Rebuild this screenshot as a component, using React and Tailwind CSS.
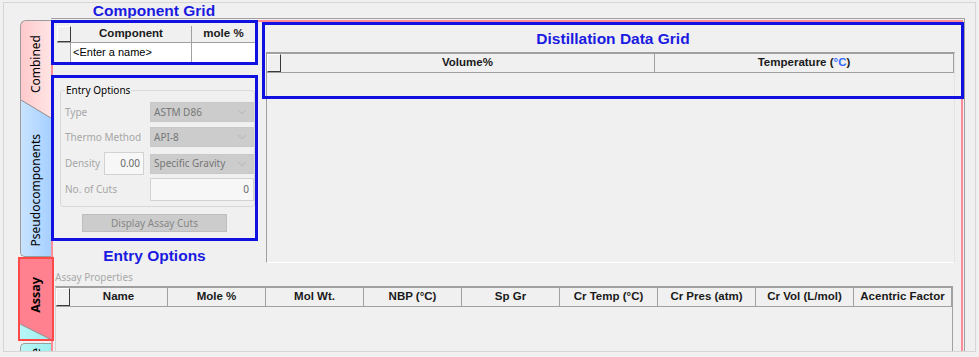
import { ChevronDown } from 'lucide-react';

const sans = "font-['Liberation_Sans',Arial,sans-serif]";
const ui = "font-['Noto_Sans',sans-serif]";

const assayCols = [
    'Name',
    'Mole %',
    'Mol Wt.',
    'NBP (°C)',
    'Sp Gr',
    'Cr Temp (°C)',
    'Cr Pres (atm)',
    'Cr Vol (L/mol)',
    'Acentric Factor',
];

function TabCut({ id, from, to, w = 30, h }) {
    return (
        <svg width={w} height={h} className="block shrink-0">
            <defs>
                <linearGradient id={id} x1="0" y1="0" x2="1" y2="0">
                    <stop offset="0" stopColor={from} />
                    <stop offset="1" stopColor={to} />
                </linearGradient>
            </defs>
            <polygon points={`0,0 ${w},${h} 0,${h}`} fill={`url(#${id})`} />
            <line x1="0" y1="0" x2={w} y2={h} stroke="#8e8e8e" strokeWidth="1" />
        </svg>
    );
}

function Tabs() {
    return (
        <div className={`flex w-[47px] shrink-0 flex-col pl-[16px] pt-[2px] text-[12px] text-black ${ui}`}>
            <div className="flex h-[98px] w-[31px] shrink-0 flex-col overflow-hidden rounded-tl-[6px] border-l border-t border-[#9c9c9c] bg-gradient-to-r from-[#ffc9cc] to-[#ffe4e4]">
                <div className="flex flex-1 items-center justify-center pt-[8px]">
                    <span className="rotate-180 leading-none [writing-mode:vertical-rl]">Combined</span>
                </div>
                <TabCut id="cut-blue" from="#c9e3ff" to="#a6d0ff" h={18} />
            </div>
            <div className="flex h-[139px] w-[31px] shrink-0 items-center justify-center rounded-bl-[5px] border-b border-l border-[#9c9c9c] bg-gradient-to-r from-[#c9e3ff] to-[#a6d0ff] pt-[6px]">
                <span className="rotate-180 leading-none [writing-mode:vertical-rl]">Pseudocomponents</span>
            </div>
            <div className="relative z-10 -ml-[2px] flex h-[84px] w-[36px] shrink-0 flex-col border-2 border-[#ff4848] bg-[#ff808f]">
                <div className="flex flex-1 items-center justify-center pt-[6px]">
                    <span className="rotate-180 text-[12.5px] font-bold leading-none [writing-mode:vertical-rl]">Assay</span>
                </div>
                <TabCut id="cut-cyan" from="#b8f6f6" to="#9eeeee" w={30} h={15} />
            </div>
            <div className="mt-[2px] flex h-[40px] w-[31px] shrink-0 justify-center rounded-tl-[5px] border-l border-t border-[#9c9c9c] bg-gradient-to-r from-[#b8f6f6] to-[#9eeeee] pt-[4px]">
                <span className="rotate-180 self-start leading-none [writing-mode:vertical-rl]">Single</span>
            </div>
        </div>
    );
}

function CornerCell() {
    return (
        <div className="h-full w-[14px] shrink-0 border-b border-l border-r border-t border-b-[#3a3a3a] border-l-white border-r-[#3a3a3a] border-t-white bg-[#f0f0f0]" />
    );
}

function Combo({ value }) {
    return (
        <div className="flex h-[20px] flex-1 items-center justify-between border border-[#c8c8c8] bg-[#cccccc] pl-[3px] pr-[4px] text-[#767676]">
            <span>{value}</span>
            <ChevronDown size={14} strokeWidth={1} className="text-[#a4a4a4]" />
        </div>
    );
}

function ComponentGrid() {
    return (
        <div className="-ml-[2px] -mt-[2px] h-[45px] w-[207px] shrink-0 border-[3px] border-[#1010e0] pl-[3px] pt-[3px]">
            <div className={`flex h-[17px] border-b border-[#a0a0a0] text-[11.5px] font-bold text-[#1a1a1a] ${sans}`}>
                <CornerCell />
                <div className="flex w-[121px] items-center justify-center border-r border-[#a0a0a0]">Component</div>
                <div className="flex flex-1 items-center justify-center">mole %</div>
            </div>
            <div className={`flex h-[19px] text-[11px] text-black ${sans}`}>
                <div className="w-[14px] border-r border-[#a0a0a0] bg-[#f0f0f0]" />
                <div className="flex w-[121px] items-center border-r border-[#a0a0a0] bg-white pl-[2px]">&lt;Enter a name&gt;</div>
                <div className="flex-1 bg-white" />
            </div>
        </div>
    );
}

function EntryOptions() {
    return (
        <div className={`-ml-[2px] mt-[10px] flex h-[166px] w-[207px] shrink-0 flex-col border-[3px] border-[#1010e0] text-[10px] ${ui}`}>
            <fieldset className="ml-[6px] mt-[5px] h-[124px] rounded-[3px] border border-[#d9d9d9] pl-[4px]">
                <legend className="px-[1px] text-[10px] leading-[14px] text-black">Entry Options</legend>
                <div className="mt-[5px] flex h-[20px] items-center">
                    <span className="w-[85px] text-[#a6a6a6]">Type</span>
                    <Combo value="ASTM D86" />
                </div>
                <div className="mt-[5px] flex h-[20px] items-center">
                    <span className="w-[85px] text-[#a6a6a6]">Thermo Method</span>
                    <Combo value="API-8" />
                </div>
                <div className="mt-[5px] flex h-[23px] items-center">
                    <span className="w-[39px] text-[#a6a6a6]">Density</span>
                    <div className="flex h-[23px] w-[40px] items-center justify-end border border-[#d2d2d2] bg-[#f7f7f7] pr-[3px] text-[#6a6a6a]">0.00</div>
                    <div className="ml-[6px] flex flex-1">
                        <Combo value="Specific Gravity" />
                    </div>
                </div>
                <div className="mt-[3px] flex h-[23px] items-center">
                    <span className="w-[85px] text-[#a6a6a6]">No. of Cuts</span>
                    <div className="flex h-[23px] flex-1 items-center justify-end border border-[#d2d2d2] bg-[#f7f7f7] pr-[4px] text-[#6a6a6a]">0</div>
                </div>
            </fieldset>
            <button className="mx-auto mt-[7px] h-[18px] w-[145px] border border-[#bdbdbd] bg-[#cccccc] leading-none text-[#868686]">
                Display Assay Cuts
            </button>
        </div>
    );
}

function Distillation() {
    return (
        <div className="ml-[4px] flex flex-1 flex-col">
            <div className="-mr-[3px] flex h-[77px] shrink-0 flex-col border-[3px] border-[#1010e0]">
                <div className={`flex h-[27px] items-center justify-center text-[15.5px] font-bold text-[#1a1ae0] ${sans}`}>
                    Distillation Data Grid
                </div>
                <div className="ml-[1px] flex w-[689px] flex-1 flex-col border-l border-r border-t-2 border-l-[#a0a0a0] border-r-[#e4e4e4] border-t-[#a0a0a0]">
                    <div className={`flex h-[19px] border-b border-[#a0a0a0] text-[11.5px] font-bold text-[#1a1a1a] ${sans}`}>
                        <CornerCell />
                        <div className="flex w-[374px] items-center justify-center border-r border-[#a0a0a0]">Volume%</div>
                        <div className="flex flex-1 items-center justify-center border-r border-[#a0a0a0]">
                            Temperature (<span className="text-[#2f6bff]">°C</span>)
                        </div>
                    </div>
                </div>
            </div>
            <div className="ml-[4px] h-[164px] w-[689px] shrink-0 border-b border-l border-r border-b-white border-l-[#a0a0a0] border-r-[#e4e4e4]" />
        </div>
    );
}

function AssayGrid() {
    return (
        <div className="ml-[2px] flex w-[898px] flex-1 flex-col border-l border-r border-t-2 border-l-[#d4d4d4] border-r-[#a0a0a0] border-t-[#a0a0a0]">
            <div className={`flex h-[19px] shrink-0 border-b border-[#a0a0a0] text-[11.5px] font-bold text-[#1a1a1a] ${sans}`}>
                <CornerCell />
                {assayCols.map((c) => (
                    <div key={c} className="flex w-[98px] shrink-0 items-center justify-center border-r border-[#a0a0a0]">
                        {c}
                    </div>
                ))}
            </div>
        </div>
    );
}

export default function App() {
    return (
        <div className="h-[357px] w-[979px] overflow-hidden bg-[#f0f0f0] pb-[5px] pl-[3px] pr-[3px] pt-[2px]">
            <div className="flex h-full flex-col overflow-hidden border border-[#d6d6d6]">
                <div className="flex h-[15px] shrink-0">
                    <div className="w-[49px] shrink-0" />
                    <div className={`w-[202px] text-center text-[15.5px] font-bold leading-[15px] text-[#1a1ae0] ${sans}`}>
                        Component Grid
                    </div>
                </div>
                <div className="flex min-h-0 flex-1">
                    <Tabs />
                    <div className="w-[914px] shrink-0 border-r border-t border-[#a0a0a0] pr-[1px] pt-[1px]">
                        <div className="flex h-full flex-col border-l-2 border-r-2 border-t-2 border-[#ff8a98]">
                            <div className="flex h-[243px] shrink-0">
                                <div className="flex w-[205px] shrink-0 flex-col">
                                    <ComponentGrid />
                                    <EntryOptions />
                                    <div className={`-ml-[2px] mt-[6px] w-[207px] shrink-0 text-center text-[15.5px] font-bold leading-[18px] text-[#1a1ae0] ${sans}`}>
                                        Entry Options
                                    </div>
                                </div>
                                <Distillation />
                            </div>
                            <div className={`mt-[3px] h-[18px] shrink-0 pl-[2px] text-[10px] leading-[18px] text-[#a9a9a9] ${ui}`}>
                                Assay Properties
                            </div>
                            <AssayGrid />
                        </div>
                    </div>
                </div>
            </div>
        </div>
    );
}
